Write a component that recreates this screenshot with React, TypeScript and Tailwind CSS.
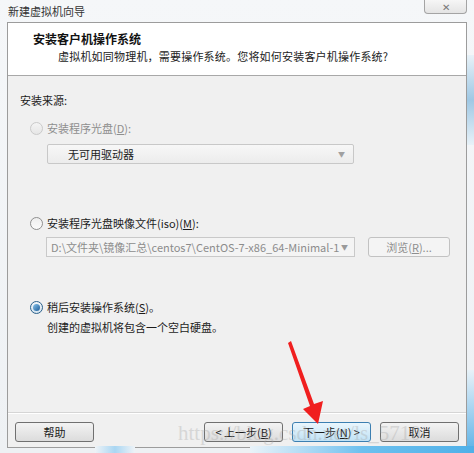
import React from "react";

const font = { fontFamily: '"Noto Sans CJK SC", "Microsoft YaHei", sans-serif' };

function Radio({ state }: { state: "disabled" | "off" | "on" }) {
  if (state === "on") {
    return (
      <span className="w-[13px] h-[13px] rounded-full border border-[#2c628b] bg-gradient-to-b from-[#f4f8fb] to-[#d4e3ee] flex items-center justify-center shrink-0">
        <span className="w-[7px] h-[7px] rounded-full bg-gradient-to-br from-[#86c3ea] to-[#1c5e9a]" />
      </span>
    );
  }
  return (
    <span
      className={
        "w-[13px] h-[13px] rounded-full border shrink-0 bg-gradient-to-b " +
        (state === "disabled"
          ? "border-[#cacaca] from-[#f4f4f4] to-[#e6e6e6]"
          : "border-[#8f8f8f] from-[#eeeeee] to-[#fbfbfb]")
      }
    />
  );
}

function Btn({ children, primary }: { children: React.ReactNode; primary?: boolean }) {
  return (
    <div
      className={
        "w-[79px] h-[20px] rounded-[3px] border flex items-center justify-center text-[11px] text-[#1a1a1a] " +
        (primary
          ? "border-[#3c7fb1] bg-gradient-to-b from-[#eaf6fd] to-[#c0e2f5]"
          : "border-[#707070] bg-gradient-to-b from-[#f3f3f3] to-[#dcdcdc]")
      }
    >
      {children}
    </div>
  );
}

export default function App() {
  return (
    <div
      className="relative w-[474px] h-[453px] overflow-hidden bg-gradient-to-b from-[#f5f7f9] to-[#eef1f4]"
      style={font}
    >
      {/* glass highlights */}
      <div className="absolute right-0 top-[55px] w-[7px] h-[90px] bg-gradient-to-b from-[#e8f2f8] via-[#9fc8e4] to-[#e8f2f8]" />
      <div className="absolute right-0 top-[370px] w-[7px] h-[83px] bg-gradient-to-b from-[#e8f2f8] to-[#56b1e6]" />
      <div className="absolute bottom-0 left-[250px] w-[224px] h-[7px] bg-gradient-to-r from-[#eaf3f9] via-[#6cc0ee] to-[#4fb0e8]" />
      <div className="absolute bottom-0 left-[95px] w-[40px] h-[7px] bg-gradient-to-r from-[#eef3f7] via-[#a9d6f2] to-[#eef3f7]" />

      {/* title bar */}
      <div className="h-[22px] flex items-center pl-[8px] text-[11px] text-[#333]">新建虚拟机向导</div>
      <div className="absolute top-0 left-[424px] w-[43px] h-[14px] rounded-b-[4px] border border-t-0 border-[#a4a4a4] bg-gradient-to-b from-[#f6f6f6] to-[#e4e4e4] flex items-center justify-center text-[10px] leading-none text-[#777]">
        ✕
      </div>

      {/* dialog */}
      <div className="ml-[7px] w-[460px] h-[426px] border border-[#9c9c9c] flex flex-col bg-[#f0f0f0]">
        <div className="h-[53px] bg-white border-b border-[#a8a8a8] shrink-0">
          <div className="pl-[25px] pt-[8px] h-[24px] text-[12px] font-bold text-[#111] leading-[16px]">
            安装客户机操作系统
          </div>
          <div className="pl-[50px] pt-[1px] text-[11px] tracking-[0.2px] text-[#222] leading-[16px]">
            虚拟机如同物理机，需要操作系统。您将如何安装客户机操作系统?
          </div>
        </div>

        <div className="flex-1 text-[11px] leading-[16px] text-[#1c1c1c]">
          <div className="pl-[12px] pt-[16px]">安装来源:</div>

          <div className="mt-[12px] pl-[22px] flex items-center gap-[4px] text-[#8e8e8e]">
            <Radio state="disabled" />
            <span>
              安装程序光盘(<span className="underline">D</span>):
            </span>
          </div>
          <div className="mt-[8px] ml-[39px] w-[307px] h-[20px] border border-[#c8c8c8] rounded-[2px] bg-gradient-to-b from-[#f7f7f7] to-[#ececec] flex items-center justify-between pl-[20px] pr-[8px]">
            <span className="text-[#1c1c1c]">无可用驱动器</span>
            <span className="text-[7px] text-[#a0a0a0]">▼</span>
          </div>

          <div className="mt-[51px] pl-[22px] flex items-center gap-[4px]">
            <Radio state="off" />
            <span>
              安装程序光盘映像文件(iso)(<span className="underline">M</span>):
            </span>
          </div>
          <div className="mt-[6px] ml-[38px] flex items-center">
            <div className="w-[309px] h-[20px] border border-[#c9c9c9] bg-[#f4f4f4] flex items-center justify-between pl-[4px] pr-[6px] text-[#8c8c8c] whitespace-nowrap overflow-hidden">
              <span>D:\文件夹\镜像汇总\centos7\CentOS-7-x86_64-Minimal-1</span>
              <span className="text-[7px] text-[#9a9a9a]">▼</span>
            </div>
            <div className="ml-[13px] w-[82px] h-[20px] border border-[#c2c2c2] rounded-[3px] bg-[#f4f4f4] flex items-center justify-center text-[#8e8e8e]">
              浏览(<span className="underline">R</span>)...
            </div>
          </div>

          <div className="mt-[42px] pl-[22px] flex items-center gap-[4px]">
            <Radio state="on" />
            <span>
              稍后安装操作系统(<span className="underline">S</span>)。
            </span>
          </div>
          <div className="mt-[4px] pl-[39px]">创建的虚拟机将包含一个空白硬盘。</div>
        </div>

        <div className="h-[35px] shrink-0 border-t border-[#d5d5d5] shadow-[inset_0_1px_0_#ffffff] flex items-start pt-[9px] px-[7px]">
          <Btn>帮助</Btn>
          <div className="ml-auto flex gap-[9px]">
            <Btn>
              &lt; 上一步(<span className="underline">B</span>)
            </Btn>
            <Btn primary>
              下一步(<span className="underline">N</span>) &gt;
            </Btn>
            <Btn>取消</Btn>
          </div>
        </div>
      </div>

      {/* watermark */}
      <div
        className="absolute left-[178px] top-[421px] text-[21px] leading-[24px] text-[#a8a8a8] opacity-35 whitespace-nowrap pointer-events-none"
        style={{ fontFamily: '"Liberation Serif", serif' }}
      >
        https://blog.csdn.net/ls_5710
      </div>

      {/* red arrow */}
      <svg className="absolute left-0 top-0 pointer-events-none" width="474" height="453">
        <polygon
          points="288,343 291,341 314,404 323,401 318,424 303,409 310,406"
          fill="#f01f1f"
        />
      </svg>
    </div>
  );
}
